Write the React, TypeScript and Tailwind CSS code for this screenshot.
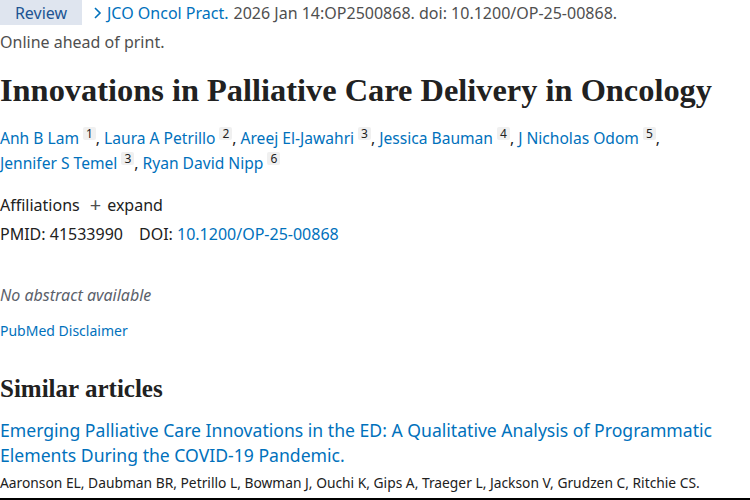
import React from "react";

const sans = { fontFamily: '"Noto Sans", "Open Sans", sans-serif' };
const serif = { fontFamily: '"Liberation Serif", "DejaVu Serif", serif' };

function Sup({ n }: { n: number }) {
  return (
    <span className="relative top-[1px] ml-[4px] inline-block h-[13px] rounded-[2px] bg-[#f0f0f0] px-[3px] align-top text-[12px] leading-[13px] text-[#212121]">
      {n}
    </span>
  );
}

function Author({ name, n, last }: { name: string; n: number; last?: boolean }) {
  return (
    <span className="whitespace-nowrap">
      <a className="text-[#0071bc]">{name}</a>
      <Sup n={n} />
      {last ? "" : ", "}
    </span>
  );
}

export default function App() {
  return (
    <div className="relative h-[500px] w-[750px] overflow-hidden bg-white text-[#212121]" style={sans}>
      <div className="flex h-[25px] items-center text-[16px]">
        <span className="flex h-[25px] w-[82px] items-center justify-center bg-[#dfe5ef] text-[#205493]">Review</span>
        <span className="ml-[11px] flex items-center">
          <svg width="10" height="14" viewBox="0 0 10 14" className="mr-[4px]">
            <path d="M2 2 L7 7 L2 12" fill="none" stroke="#0071bc" strokeWidth="1.6" />
          </svg>
          <a className="text-[#0071bc]">JCO Oncol Pract.</a>
          <span className="ml-[5px] text-[#4f4f4f]">2026 Jan 14:OP2500868. doi: 10.1200/OP-25-00868.</span>
        </span>
      </div>
      <div className="mt-[5px] text-[16px] leading-[24px] text-[#4f4f4f]">Online ahead of print.</div>
      <h1 className="mt-[16px] whitespace-nowrap text-[32.4px] font-bold leading-[40px] text-[#212121]" style={serif}>
        Innovations in Palliative Care Delivery in Oncology
      </h1>
      <div className="mt-[16px] text-[15.6px] leading-[25px]">
        <Author name="Anh B Lam" n={1} />
        <Author name="Laura A Petrillo" n={2} />
        <Author name="Areej El-Jawahri" n={3} />
        <Author name="Jessica Bauman" n={4} />
        <Author name="J Nicholas Odom" n={5} />
        <br />
        <Author name="Jennifer S Temel" n={3} />
        <Author name="Ryan David Nipp" n={6} last />
      </div>
      <div className="mt-[17px] flex items-center text-[16px] leading-[24px]">
        <span>Affiliations</span>
        <span className="ml-[10px] mr-[6px] text-[20px] leading-[20px] text-[#4f4f4f]">+</span>
        <span>expand</span>
      </div>
      <div className="mt-[5px] text-[16px] leading-[24px]">
        PMID: 41533990<span className="ml-[16px]">DOI: </span>
        <a className="text-[#0071bc]">10.1200/OP-25-00868</a>
      </div>
      <div className="mt-[37px] text-[16px] italic leading-[24px] text-[#5b616b]">No abstract available</div>
      <div className="mt-[14px] text-[14px] leading-[20px] text-[#0071bc]">PubMed Disclaimer</div>
      <h2 className="mt-[33px] text-[25px] font-bold leading-[30px] text-[#212121]" style={serif}>
        Similar articles
      </h2>
      <div className="mt-[14px] text-[17.6px] leading-[25px] text-[#0071bc]">
        Emerging Palliative Care Innovations in the ED: A Qualitative Analysis of Programmatic
        <br />
        Elements During the COVID-19 Pandemic.
      </div>
      <div className="mt-[5px] whitespace-nowrap text-[13.8px] leading-[20px] text-[#212121]">
        Aaronson EL, Daubman BR, Petrillo L, Bowman J, Ouchi K, Gips A, Traeger L, Jackson V, Grudzen C, Ritchie CS.
      </div>
      <div className="absolute bottom-0 left-0 h-[2px] w-full bg-black" />
    </div>
  );
}
